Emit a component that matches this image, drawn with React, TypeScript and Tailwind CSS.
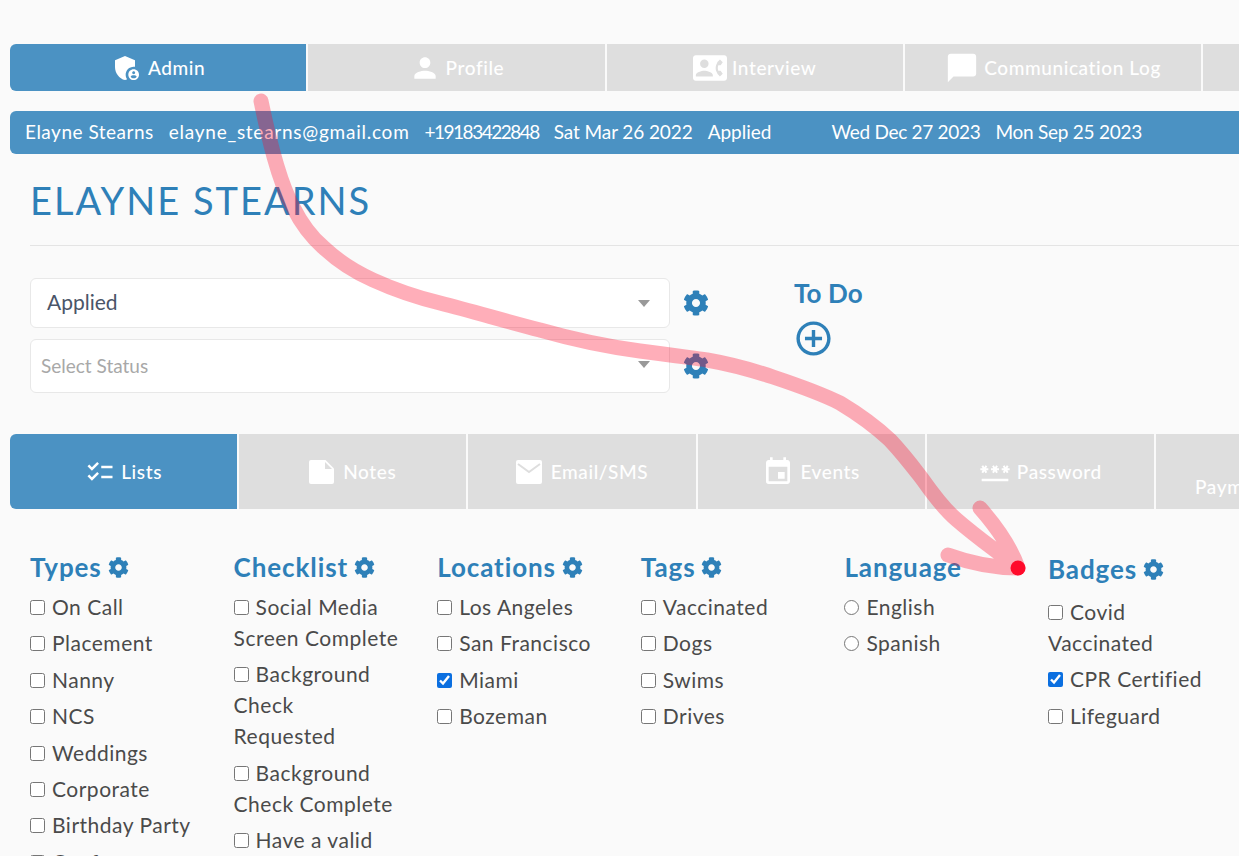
import type { ReactNode } from 'react'
import { FaCog } from 'react-icons/fa'
import {
  MdAddCircleOutline,
  MdAdminPanelSettings,
  MdChatBubble,
  MdChecklist,
  MdContactPhone,
  MdEvent,
  MdPassword,
  MdPayment,
  MdPerson,
} from 'react-icons/md'

type Option = { label: string; checked?: boolean }

const columns: { title: string; gear: boolean; radio?: boolean; options: Option[] }[] = [
  {
    title: 'Types',
    gear: true,
    options: [
      { label: 'On Call' },
      { label: 'Placement' },
      { label: 'Nanny' },
      { label: 'NCS' },
      { label: 'Weddings' },
      { label: 'Corporate' },
      { label: 'Birthday Party' },
      { label: 'Conference' },
    ],
  },
  {
    title: 'Checklist',
    gear: true,
    options: [
      { label: 'Social Media Screen Complete' },
      { label: 'Background Check Requested' },
      { label: 'Background Check Complete' },
      { label: 'Have a valid' },
    ],
  },
  {
    title: 'Locations',
    gear: true,
    options: [
      { label: 'Los Angeles' },
      { label: 'San Francisco' },
      { label: 'Miami', checked: true },
      { label: 'Bozeman' },
    ],
  },
  {
    title: 'Tags',
    gear: true,
    options: [{ label: 'Vaccinated' }, { label: 'Dogs' }, { label: 'Swims' }, { label: 'Drives' }],
  },
  {
    title: 'Language',
    gear: false,
    radio: true,
    options: [{ label: 'English' }, { label: 'Spanish' }],
  },
]

const badges: Option[] = [
  { label: 'Covid Vaccinated' },
  { label: 'CPR Certified', checked: true },
  { label: 'Lifeguard' },
]

function NoteIcon() {
  return (
    <svg width="25" height="24" viewBox="0 0 25 24" className="mr-[3px]">
      <path d="M2 0h14.5L25 8.5V22a2 2 0 0 1-2 2H2a2 2 0 0 1-2-2V2a2 2 0 0 1 2-2z" fill="#ffffff" />
      <path d="M16 2v7h7z" fill="#dedede" />
    </svg>
  )
}

function MailIcon() {
  return (
    <svg width="26" height="24" viewBox="0 0 26 24" className="mr-[3px]">
      <rect width="26" height="24" rx="2" fill="#ffffff" />
      <path d="M2 4l11 8 11-8" fill="none" stroke="#dedede" strokeWidth="2" />
    </svg>
  )
}

function TopTab({ icon, label, active }: { icon?: ReactNode; label?: string; active?: boolean }) {
  return (
    <div
      className={`flex h-[47px] w-[296.3px] shrink-0 items-center justify-center gap-[5px] pt-[1px] text-[19px] font-medium tracking-[0.6px] text-white ${
        active ? 'rounded-l-md bg-[#4b92c3]' : 'bg-[#dedede]'
      }`}
    >
      {icon}
      {label}
    </div>
  )
}

function SubTab({ icon, label, active }: { icon: ReactNode; label: string; active?: boolean }) {
  return (
    <div
      className={`flex h-[75px] w-[227.2px] shrink-0 items-center justify-center gap-[6px] pt-[1px] text-[19px] font-medium tracking-[0.6px] text-white ${
        active ? 'rounded-l-md bg-[#4b92c3]' : 'bg-[#dedede]'
      }`}
    >
      {icon}
      {label}
    </div>
  )
}

function OptionRow({ option, radio, name }: { option: Option; radio?: boolean; name: string }) {
  return (
    <div className="mb-[5.4px] w-[166px] text-[21px] leading-[31px] tracking-[0.5px] text-[#4a4a4a]">
      <input
        type={radio ? 'radio' : 'checkbox'}
        name={radio ? name : undefined}
        defaultChecked={option.checked}
        className="mr-[7px] h-[15px] w-[15px] accent-[#0b6fe0]"
      />
      {option.label}
    </div>
  )
}

function Heading({ title, gear }: { title: string; gear: boolean }) {
  return (
    <div className="mb-[6px] flex h-[36px] items-center gap-[6px] text-[26px] font-bold tracking-[0.9px] text-[#2e80b8]">
      {title}
      {gear && <FaCog size={21} />}
    </div>
  )
}

export default function App() {
  return (
    <div className="relative h-[856px] w-[1239px] overflow-hidden bg-[#fafafa] pt-[44px] font-['Lato',sans-serif]">
      {/* Main tabs */}
      <div className="flex gap-[2px] pl-[10px]">
        <TopTab active icon={<MdAdminPanelSettings size={32} />} label="Admin" />
        <TopTab icon={<MdPerson size={32} />} label="Profile" />
        <TopTab icon={<MdContactPhone size={34} />} label="Interview" />
        <TopTab icon={<MdChatBubble size={34} />} label="Communication Log" />
        <TopTab />
      </div>

      {/* Summary bar */}
      <div className="ml-[10px] mt-[20px] flex h-[43px] items-center gap-[15px] rounded-l-md bg-[#4b92c3] pl-[15px] text-[19px] text-white">
        <span className="tracking-[0.5px]">Elayne Stearns</span>
        <span className="tracking-[0.75px]">elayne_stearns@gmail.com</span>
        <span className="tracking-[-1.5px]">+19183422848</span>
        <span className="tracking-[-0.1px]">Sat Mar 26 2022</span>
        <span>Applied</span>
        <span className="ml-[45px] tracking-[-0.3px]">Wed Dec 27 2023</span>
        <span className="tracking-[-0.25px]">Mon Sep 25 2023</span>
      </div>

      {/* Name */}
      <div className="ml-[30px] mt-[23px] h-[69px] border-b border-[#e4e4e4] text-[38px] leading-[46px] tracking-[2px] text-[#2e80b8]">
        ELAYNE STEARNS
      </div>

      {/* Status + to do */}
      <div className="mt-[32px] flex pl-[30px]">
        <div className="flex w-[679px] flex-col gap-[11px]">
          <div className="flex items-center gap-[13px]">
            <div className="flex h-[50px] w-[640px] items-center justify-between rounded-md border border-[#e8e8e8] bg-white pl-[16px] pr-[19px] text-[21px] text-[#4a5568]">
              <span className="pb-[3px]">Applied</span>
              <div className="h-0 w-0 border-x-[6px] border-t-[7px] border-x-transparent border-t-[#999999]" />
            </div>
            <FaCog size={26} className="text-[#2e80b8]" />
          </div>
          <div className="flex items-center gap-[13px]">
            <div className="flex h-[54px] w-[640px] items-center justify-between rounded-md border border-[#e8e8e8] bg-white pb-[4px] pl-[10px] pr-[19px] text-[19px] text-[#a8a8a8]">
              <span className="pt-[4px]">Select Status</span>
              <div className="h-0 w-0 border-x-[6px] border-t-[7px] border-x-transparent border-t-[#999999]" />
            </div>
            <FaCog size={26} className="text-[#2e80b8]" />
          </div>
        </div>
        <div className="ml-[85px]">
          <div className="h-[30px] text-[26px] font-bold leading-[30px] tracking-[0.1px] text-[#2e80b8]">To Do</div>
          <MdAddCircleOutline size={41} className="ml-[-1px] mt-[10px] text-[#2e80b8]" />
        </div>
      </div>

      {/* Section tabs */}
      <div className="mt-[41px] flex gap-[2px] pl-[10px]">
        <SubTab active icon={<MdChecklist size={30} />} label="Lists" />
        <SubTab icon={<NoteIcon />} label="Notes" />
        <SubTab icon={<MailIcon />} label="Email/SMS" />
        <SubTab icon={<MdEvent size={32} />} label="Events" />
        <SubTab icon={<MdPassword size={32} />} label="Password" />
        <div className="flex h-[75px] w-[227.2px] shrink-0 flex-col items-center justify-center bg-[#dedede] text-[19px] font-medium leading-[24px] tracking-[0.6px] text-white">
          <MdPayment size={30} />
          <span>Payment History</span>
        </div>
      </div>

      {/* Lists */}
      <div className="mt-[40px] flex pl-[30px]">
        {columns.map(col => (
          <div key={col.title} className="w-[203.6px] shrink-0">
            <Heading title={col.title} gear={col.gear} />
            {col.options.map(option => (
              <OptionRow key={option.label} option={option} radio={col.radio} name={col.title} />
            ))}
          </div>
        ))}
        <div className="w-[180px] shrink-0 pt-[2px]">
          <Heading title="Badges" gear />
          <div className="pt-[3px]">
            {badges.map(option => (
              <OptionRow key={option.label} option={option} name="Badges" />
            ))}
          </div>
        </div>
      </div>

      {/* Annotation arrow drawn over the page */}
      <svg className="pointer-events-none absolute left-0 top-0" width="1239" height="856" fill="none">
        <path
          d="M261 101C268 135 278 180 293 207C303 227 315 240 323 247C340 263 355 272 373 280C395 290 415 297 440 303C475 312 505 321 540 330C575 340 610 347 640 351C665 354 685 357 707 360C730 364 752 370 773 377C800 386 820 393 840 403C860 415 875 426 890 440C905 456 913 467 923 480C935 497 945 510 957 520C980 540 1000 553 1018 568C1010 545 995 525 980 508M1018 568C995 568 970 563 948 555"
          stroke="#ff0a2a"
          strokeOpacity="0.33"
          strokeWidth="15"
          strokeLinecap="round"
          strokeLinejoin="round"
        />
        <circle cx="1018" cy="568" r="7.5" fill="#ff0a2a" />
      </svg>
    </div>
  )
}
